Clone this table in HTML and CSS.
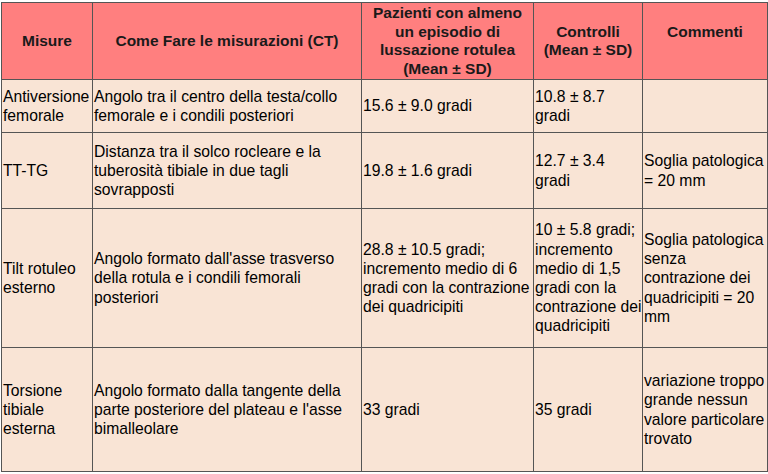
FILE: index.html
```html
<!DOCTYPE html>
<html lang="it">
<head>
<meta charset="utf-8">
<title>Misure</title>
<link rel="stylesheet" href="styles.css">
</head>
<body>
<table class="grid">
  <colgroup>
    <col class="c1"><col class="c2"><col class="c3"><col class="c4"><col class="c5">
  </colgroup>
  <thead>
    <tr class="rh">
      <th>Misure</th>
      <th>Come Fare le misurazioni (CT)</th>
      <th>Pazienti con almeno un episodio di lussazione rotulea (Mean ± SD)</th>
      <th>Controlli<br>(Mean ± SD)</th>
      <th>Commenti<br>&nbsp;</th>
    </tr>
  </thead>
  <tbody>
    <tr class="r1">
      <td>Antiversione femorale</td>
      <td>Angolo tra il centro della testa/collo femorale e i condili posteriori</td>
      <td>15.6 ± 9.0 gradi</td>
      <td>10.8 ± 8.7 gradi</td>
      <td></td>
    </tr>
    <tr class="r2">
      <td>TT-TG</td>
      <td>Distanza tra il solco rocleare e la tuberosità tibiale in due tagli sovrapposti</td>
      <td>19.8 ± 1.6 gradi</td>
      <td>12.7 ± 3.4 gradi</td>
      <td>Soglia patologica = 20 mm</td>
    </tr>
    <tr class="r3">
      <td>Tilt rotuleo esterno</td>
      <td>Angolo formato dall'asse trasverso della rotula e i condili femorali posteriori</td>
      <td>28.8 ± 10.5 gradi; incremento medio di 6 gradi con la contrazione dei quadricipiti</td>
      <td>10 ± 5.8 gradi; incremento medio di 1,5 gradi con la contrazione dei quadricipiti</td>
      <td>Soglia patologica senza contrazione dei quadricipiti = 20 mm</td>
    </tr>
    <tr class="r4">
      <td>Torsione tibiale esterna</td>
      <td>Angolo formato dalla tangente della parte posteriore del plateau e l'asse bimalleolare</td>
      <td>33 gradi</td>
      <td>35 gradi</td>
      <td>variazione troppo grande nessun valore particolare trovato</td>
    </tr>
  </tbody>
</table>
</body>
</html>
```

FILE: styles.css
```css
html, body {
  margin: 0;
  padding: 0;
  background: #ffffff;
}

body {
  padding: 2px 0 0 1px;
  font-family: "Liberation Sans", Arial, sans-serif;
  color: #000;
}

.grid {
  border-collapse: collapse;
  table-layout: fixed;
  width: 766px;
  border: 1px solid #666;
}

.c1 { width: 91px; }
.c2 { width: 269px; }
.c3 { width: 172px; }
.c4 { width: 109px; }
.c5 { width: 125px; }

.grid th,
.grid td {
  border: 1px solid #555;
  vertical-align: middle;
  overflow-wrap: break-word;
}

.grid th {
  background: #ff7f7f;
  font-size: 15.5px;
  font-weight: bold;
  line-height: 18.5px;
  text-align: center;
  color: #1a1a1a;
  padding: 0 6px;
}

.grid td {
  background: #f9e4d5;
  font-size: 15.7px;
  line-height: 19.2px;
  text-align: left;
  padding: 0 0 0 1px;
}

.rh { height: 77px; }
.r1 { height: 53px; }
.r2 { height: 76px; }
.r3 { height: 139px; }
.r4 { height: 124px; }
```
